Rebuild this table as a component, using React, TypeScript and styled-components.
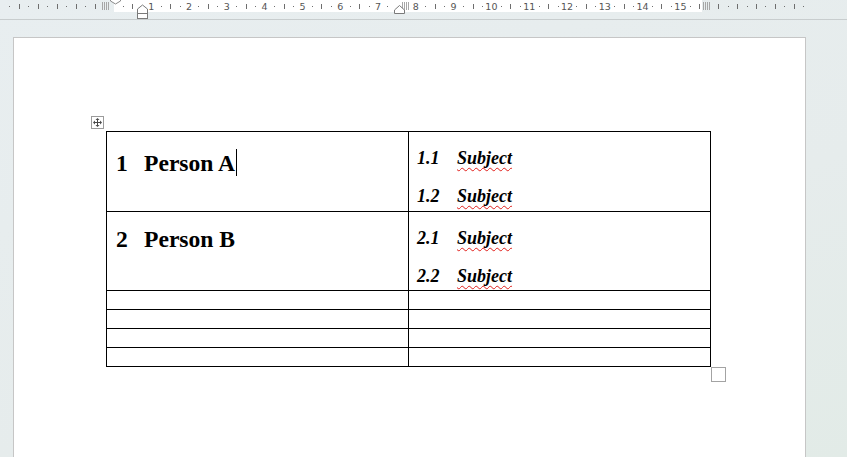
import React from "react";
import styled, { createGlobalStyle } from "styled-components";

const GlobalStyle = createGlobalStyle`
  html, body {
    margin: 0;
    padding: 0;
  }
  body {
    width: 847px;
    height: 457px;
    overflow: hidden;
    background: linear-gradient(160deg, #e8eef0 0%, #e6ecec 60%, #e2ebe7 100%);
    font-family: "Liberation Serif", "Times New Roman", serif;
  }
`;

const Window = styled.div`
  width: 847px;
  height: 457px;
  display: flex;
  flex-direction: column;
`;

const RulerBar = styled.div`
  flex: none;
  height: 19px;
  border-bottom: 1px solid #c8cdce;
`;

const Workspace = styled.div`
  flex: 1;
  display: flex;
  padding: 17px 0 0 13px;
  min-height: 0;
`;

const Page = styled.div`
  box-sizing: border-box;
  width: 793px;
  height: 440px;
  background: #fff;
  border: 1px solid #c6c6c6;
  border-bottom: none;
  padding: 93px 0 0 92px;
`;

const TableWrap = styled.div`
  position: relative;
  width: fit-content;
`;

const Grid = styled.div`
  display: grid;
  grid-template-columns: 302px 302px;
  grid-template-rows: 80px 79px 19px 19px 19px 19px;
  border-top: 1px solid #000;
  border-left: 1px solid #000;
`;

const Cell = styled.div<{ $top?: number; $left?: number }>`
  box-sizing: border-box;
  border-right: 1px solid #000;
  border-bottom: 1px solid #000;
  padding-top: ${(p) => p.$top ?? 0}px;
  padding-left: ${(p) => p.$left ?? 0}px;
`;

const Heading = styled.div`
  font-size: 23.6px;
  line-height: 26px;
  font-weight: bold;
  color: #000;
  white-space: nowrap;
`;

const HeadNum = styled.span`
  display: inline-block;
  width: 28px;
`;

const Caret = styled.span`
  display: inline-block;
  width: 1px;
  height: 27px;
  background: #000;
  margin-left: 1px;
  vertical-align: -5px;
`;

const SubLine = styled.div`
  font-size: 18px;
  line-height: 20px;
  font-weight: bold;
  font-style: italic;
  color: #000;
  white-space: nowrap;
  & + & {
    margin-top: 18px;
  }
`;

const SubNum = styled.span`
  display: inline-block;
  width: 40px;
`;

const Misspelled = styled.span`
  text-decoration: underline wavy #e0201c;
  text-decoration-thickness: 1px;
  text-underline-offset: 3px;
  text-decoration-skip-ink: none;
`;

const MoveHandle = styled.div`
  position: absolute;
  left: -15px;
  top: -15px;
  box-sizing: border-box;
  width: 13px;
  height: 13px;
  border: 1px solid #9b9b9b;
  background: #fff;
  display: flex;
  align-items: center;
  justify-content: center;
`;

const ResizeHandle = styled.div`
  position: absolute;
  left: 605px;
  top: 236px;
  box-sizing: border-box;
  width: 15px;
  height: 15px;
  border: 1px solid #a3a3a3;
  background: #fff;
`;

const X0 = 113.4;
const Q = 9.45;

function GridMark({ x }: { x: number }) {
  const xs = [0, 2, 4, 6].map((d) => x + d + 0.5);
  const ys = [3, 5, 7, 9].map((d) => d + 0.5);
  return (
    <g>
      {xs.map((v) => (
        <line key={"v" + v} x1={v} x2={v} y1={2} y2={10} stroke="#a6a6a6" />
      ))}
      {ys.map((v) => (
        <line key={"h" + v} x1={x} x2={x + 7} y1={v} y2={v} stroke="#a6a6a6" strokeDasharray="1 1" />
      ))}
    </g>
  );
}

function Ruler() {
  const items: React.ReactNode[] = [];
  for (let i = -12; i <= 78; i++) {
    const x = X0 + i * Q;
    if (x < 4 || x > 808) continue;
    if (Math.abs(x - 105.5) < 5 || Math.abs(x - 405) < 6 || Math.abs(x - 706) < 5) continue;
    if (Math.abs(x - 142.5) < 6 || Math.abs(x - 400) < 6 || Math.abs(x - 115) < 4) continue;
    const inside = x > 114 && x < 702;
    if (i % 4 === 0 && inside) {
      items.push(
        <text
          key={i}
          x={x}
          y={10}
          textAnchor="middle"
          fontSize={9.5}
          fontFamily='"DejaVu Sans", sans-serif'
          fill="#555"
        >
          {i / 4}
        </text>
      );
    } else if (i % 2 === 0) {
      const px = Math.round(x) + 0.5;
      items.push(<line key={i} x1={px} x2={px} y1={4} y2={9} stroke="#6e6e6e" />);
    } else {
      items.push(<rect key={i} x={Math.round(x)} y={6} width={1} height={1} fill="#6e6e6e" />);
    }
  }
  return (
    <svg width={847} height={19} style={{ display: "block" }}>
      <rect x={114} y={0} width={588} height={12} fill="#fff" />
      {items}
      <GridMark x={102} />
      <GridMark x={402} />
      <GridMark x={703} />
      <path d="M110.5,0 V1 L115.5,4 L120.5,1 V0" fill="#fff" stroke="#8a8a8a" />
      <path d="M137.5,9 L142.5,5 L147.5,9 V13.5 H137.5 Z" fill="#fff" stroke="#7a7a7a" />
      <rect x={137.5} y={13.5} width={10} height={5} fill="#fff" stroke="#7a7a7a" />
      <path d="M394.5,13.5 V10 L399.5,5.5 L404.5,10 V13.5 Z" fill="#fff" stroke="#7a7a7a" />
    </svg>
  );
}

function MoveIcon() {
  return (
    <svg width={9} height={9} viewBox="0 0 9 9">
      <path d="M4.5 1 V8 M1 4.5 H8" stroke="#4a4a4a" strokeWidth={1} />
      <path d="M4.5 0 L6.5 2 H2.5 Z M4.5 9 L6.5 7 H2.5 Z M0 4.5 L2 2.5 V6.5 Z M9 4.5 L7 2.5 V6.5 Z" fill="#4a4a4a" />
    </svg>
  );
}

const rows = [
  { n: "1", name: "Person A", subs: ["1.1", "1.2"], caret: true, top: 17 },
  { n: "2", name: "Person B", subs: ["2.1", "2.2"], caret: false, top: 14 },
];

export default function App() {
  return (
    <>
      <GlobalStyle />
      <Window>
        <RulerBar>
          <Ruler />
        </RulerBar>
        <Workspace>
          <Page>
            <TableWrap>
              <MoveHandle>
                <MoveIcon />
              </MoveHandle>
              <Grid>
                {rows.map((r) => (
                  <React.Fragment key={r.n}>
                    <Cell $top={r.top} $left={9}>
                      <Heading>
                        <HeadNum>{r.n}</HeadNum>
                        {r.name}
                        {r.caret && <Caret />}
                      </Heading>
                    </Cell>
                    <Cell $top={16} $left={8}>
                      {r.subs.map((s) => (
                        <SubLine key={s}>
                          <SubNum>{s}</SubNum>
                          <Misspelled>Subject</Misspelled>
                        </SubLine>
                      ))}
                    </Cell>
                  </React.Fragment>
                ))}
                {Array.from({ length: 8 }).map((_, i) => (
                  <Cell key={"e" + i} />
                ))}
              </Grid>
              <ResizeHandle />
            </TableWrap>
          </Page>
        </Workspace>
      </Window>
    </>
  );
}
